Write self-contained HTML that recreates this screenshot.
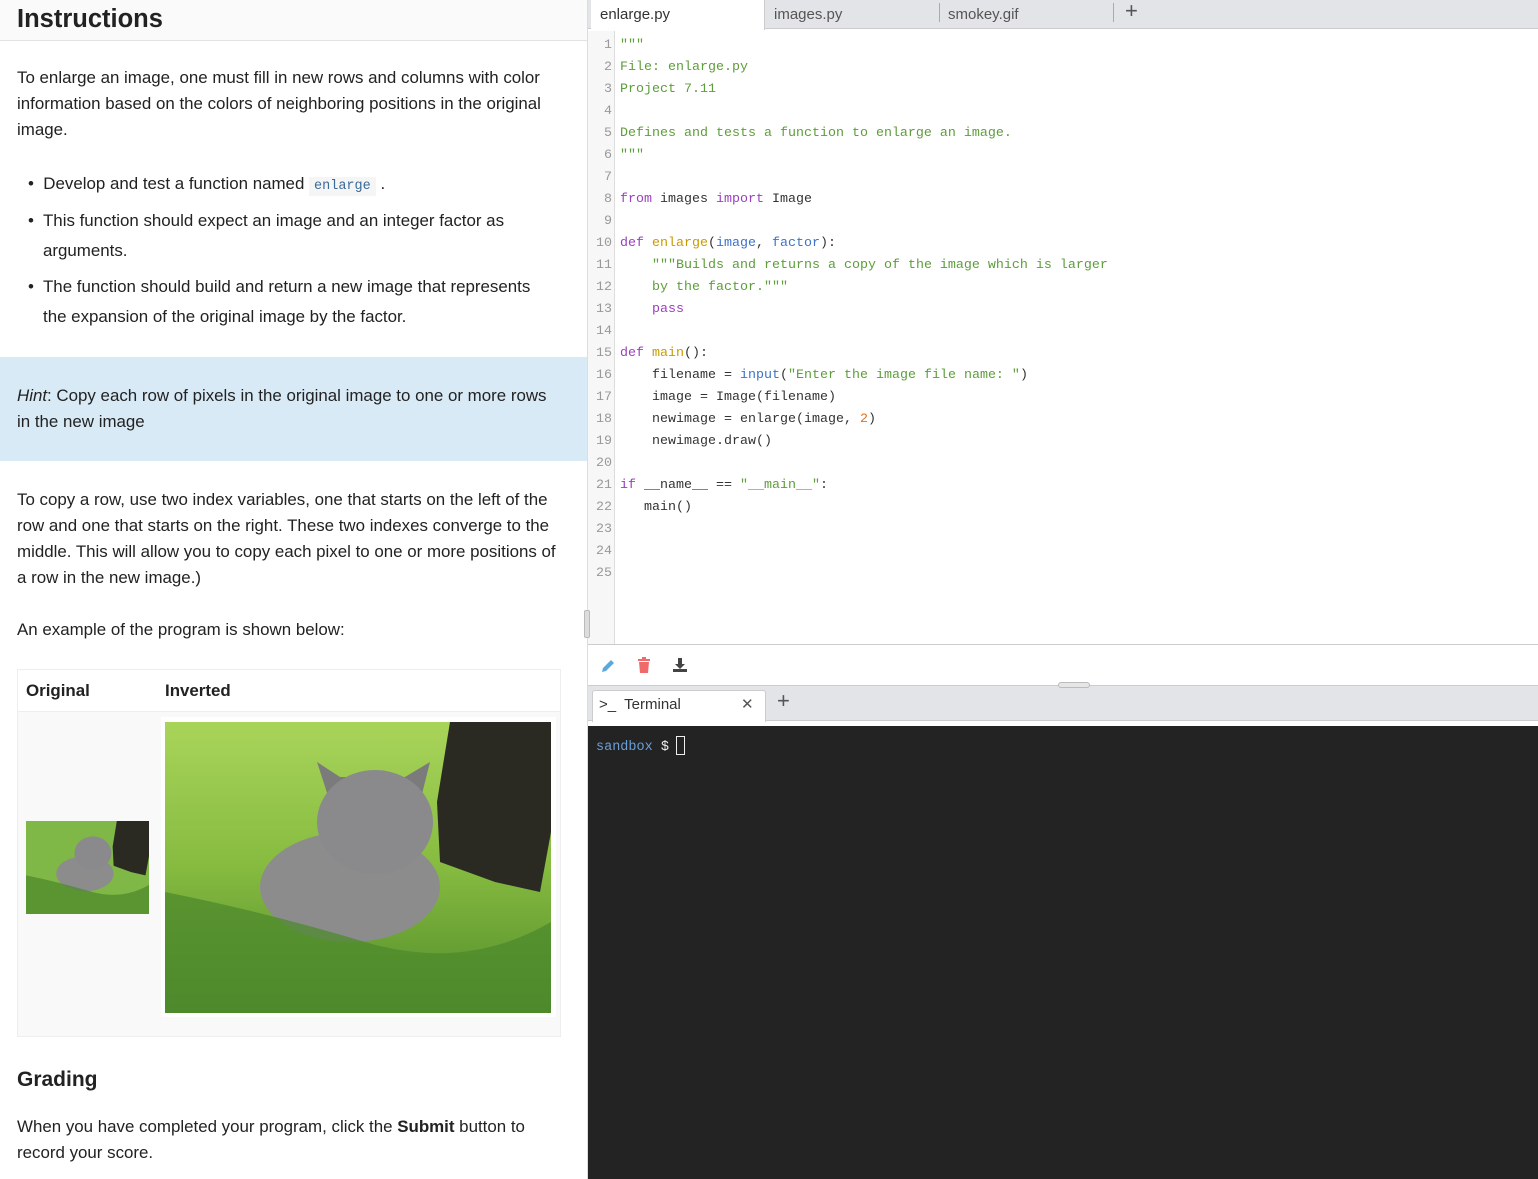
<!DOCTYPE html>
<html><head><meta charset="utf-8"><style>
*{margin:0;padding:0;box-sizing:border-box}
body{width:1538px;height:1179px;overflow:hidden;background:#fff;font-family:"Liberation Sans",sans-serif;color:#222;position:relative}
.l{position:absolute;white-space:nowrap;font-size:16.9px;line-height:26px}
.left{position:absolute;left:0;top:0;width:588px;height:1179px;background:#fff;border-right:1px solid #ddd}
code{font-family:"Liberation Mono",monospace;font-size:13.5px;background:#f5f5f5;color:#3a6a9a;padding:2px 5px}
.code{position:absolute;left:620px;top:35px;font-family:"Liberation Mono",monospace;font-size:13.33px;line-height:22px;color:#333;white-space:pre}
.gut{position:absolute;left:588px;top:35px;width:27px;height:609px;font-family:"Liberation Mono",monospace;font-size:13.33px;line-height:22px;color:#999;text-align:right;padding-right:3px;white-space:pre}
.s{color:#5c9e3a}.k{color:#9b3fc0}.f{color:#c99a00}.p{color:#3d73c8}.n{color:#e0701c}
</style></head><body>
<div class="left">
 <div style="position:absolute;left:0;top:0;width:587px;height:41px;background:#fafafa;border-bottom:1px solid #e2e2e2"></div>
 <div class="l" style="left:17px;top:4px;font-size:25.5px;font-weight:bold;line-height:30px;color:#222">Instructions</div>
 <div class="l" style="left:17px;top:65px">To enlarge an image, one must fill in new rows and columns with color</div>
 <div class="l" style="left:17px;top:91px">information based on the colors of neighboring positions in the original</div>
 <div class="l" style="left:17px;top:117px">image.</div>
 <div class="l" style="left:28px;top:171px">•&nbsp; Develop and test a function named <code>enlarge</code> .</div>
 <div class="l" style="left:28px;top:208px">•&nbsp; This function should expect an image and an integer factor as</div>
 <div class="l" style="left:43px;top:238px">arguments.</div>
 <div class="l" style="left:28px;top:274px">•&nbsp; The function should build and return a new image that represents</div>
 <div class="l" style="left:43px;top:304px">the expansion of the original image by the factor.</div>
 <div style="position:absolute;left:0;top:357px;width:587px;height:104px;background:#d9eaf7"></div>
 <div class="l" style="left:17px;top:383px"><i>Hint</i>: Copy each row of pixels in the original image to one or more rows</div>
 <div class="l" style="left:17px;top:409px">in the new image</div>
 <div class="l" style="left:17px;top:487px">To copy a row, use two index variables, one that starts on the left of the</div>
 <div class="l" style="left:17px;top:513px">row and one that starts on the right. These two indexes converge to the</div>
 <div class="l" style="left:17px;top:539px">middle. This will allow you to copy each pixel to one or more positions of</div>
 <div class="l" style="left:17px;top:565px">a row in the new image.)</div>
 <div class="l" style="left:17px;top:617px">An example of the program is shown below:</div>
 <div style="position:absolute;left:17px;top:669px;width:544px;height:368px;border:1px solid #eee;background:#f9f9f9"></div>
 <div style="position:absolute;left:18px;top:670px;width:542px;height:42px;background:#fff;border-bottom:1px solid #eee"></div>
 <div class="l" style="left:26px;top:678px;font-weight:bold">Original</div>
 <div class="l" style="left:165px;top:678px;font-weight:bold">Inverted</div>
 <div style="position:absolute;left:161px;top:717px;width:395px;height:300px;background:#fff"></div>
 <svg style="position:absolute;left:165px;top:722px" width="386" height="291" viewBox="0 0 386 291" preserveAspectRatio="none">
  <defs><linearGradient id="g" x1="0" y1="0" x2="0" y2="1"><stop offset="0" stop-color="#a9d45a"/><stop offset=".5" stop-color="#86bb40"/><stop offset="1" stop-color="#4f8a2a"/></linearGradient></defs>
  <rect width="386" height="291" fill="url(#g)"/>
  <path d="M285 0 H386 V110 L375 170 L330 160 L275 140 L272 80 Z" fill="#2a2a22"/>
  <ellipse cx="185" cy="165" rx="90" ry="55" fill="#8c8c8c"/>
  <path d="M152 40 L165 80 L255 80 L265 40 L240 55 L175 55 Z" fill="#7b7b7b"/>
  <ellipse cx="210" cy="100" rx="58" ry="52" fill="#8a8a8c"/>
  <path d="M0 170 Q100 190 200 220 T386 200 V291 H0Z" fill="#4d8a2c" opacity=".75"/>
 </svg>
 <svg style="position:absolute;left:26px;top:821px" width="123" height="93" viewBox="0 0 386 291" preserveAspectRatio="none">
  <rect width="386" height="291" fill="#7fb846"/>
  <path d="M285 0 H386 V110 L375 170 L330 160 L275 140 L272 80 Z" fill="#2a2a22"/>
  <ellipse cx="185" cy="165" rx="90" ry="55" fill="#8c8c8c"/>
  <ellipse cx="210" cy="100" rx="58" ry="52" fill="#8a8a8c"/>
  <path d="M0 170 Q100 190 200 220 T386 200 V291 H0Z" fill="#4d8a2c" opacity=".75"/>
 </svg>
 <div class="l" style="left:17px;top:1066px;font-size:21px;font-weight:bold;line-height:28px">Grading</div>
 <div class="l" style="left:17px;top:1114px">When you have completed your program, click the <b>Submit</b> button to</div>
 <div class="l" style="left:17px;top:1140px">record your score.</div>
</div>
<!-- tabs -->
<div style="position:absolute;left:588px;top:0;width:950px;height:29px;background:#e2e4e8;border-bottom:1px solid #ccc"></div>
<div style="position:absolute;left:591px;top:0;width:174px;height:30px;background:#fff;border-right:1px solid #ccc"></div>
<div class="l" style="left:600px;top:2px;font-size:15px;color:#333">enlarge.py</div>
<div class="l" style="left:774px;top:2px;font-size:15px;color:#555">images.py</div>
<div style="position:absolute;left:939px;top:3px;width:1px;height:19px;background:#aaa"></div>
<div class="l" style="left:948px;top:2px;font-size:15px;color:#555">smokey.gif</div>
<div style="position:absolute;left:1113px;top:3px;width:1px;height:19px;background:#aaa"></div>
<div class="l" style="left:1125px;top:-2px;font-size:22px;color:#555">+</div>
<div style="position:absolute;left:588px;top:31px;width:27px;height:613px;background:#f7f7f7;border-right:1px solid #ddd"></div>
<div class="gut">1
2
3
4
5
6
7
8
9
10
11
12
13
14
15
16
17
18
19
20
21
22
23
24
25</div>
<div class="code"><span class="s">"""
File: enlarge.py
Project 7.11

Defines and tests a function to enlarge an image.
"""</span>

<span class="k">from</span> images <span class="k">import</span> Image

<span class="k">def</span> <span class="f">enlarge</span>(<span class="p">image</span>, <span class="p">factor</span>):
    <span class="s">"""Builds and returns a copy of the image which is larger
    by the factor."""</span>
    <span class="k">pass</span>

<span class="k">def</span> <span class="f">main</span>():
    filename = <span class="p">input</span>(<span class="s">"Enter the image file name: "</span>)
    image = Image(filename)
    newimage = enlarge(image, <span class="n">2</span>)
    newimage.draw()

<span class="k">if</span> __name__ == <span class="s">"__main__"</span>:
   main()</div>
<div style="position:absolute;left:584px;top:610px;width:6px;height:28px;background:#ddd;border:1px solid #bbb;border-radius:2px"></div>
<div style="position:absolute;left:588px;top:644px;width:950px;height:1px;background:#ccc"></div>
<!-- toolbar icons -->
<svg style="position:absolute;left:600px;top:658px" width="16" height="16" viewBox="0 0 16 16"><path d="M2 14 L3 10 L11 2 L14 5 L6 13 Z" fill="#5aa8e0"/></svg>
<svg style="position:absolute;left:637px;top:657px" width="14" height="16" viewBox="0 0 14 16"><rect x="1" y="2" width="12" height="2" fill="#ef6b6b"/><rect x="5" y="0" width="4" height="2" fill="#ef6b6b"/><path d="M2 5 H12 L11 16 H3 Z" fill="#ef6b6b"/></svg>
<svg style="position:absolute;left:672px;top:657px" width="16" height="16" viewBox="0 0 16 16"><path d="M6 1 H10 V7 H13 L8 12 L3 7 H6 Z" fill="#444"/><rect x="1" y="12" width="14" height="3" fill="#444"/></svg>
<!-- terminal tabs -->
<div style="position:absolute;left:588px;top:685px;width:950px;height:36px;background:#e2e4e8;border-top:1px solid #ccc;border-bottom:1px solid #ccc"></div>
<div style="position:absolute;left:1058px;top:682px;width:32px;height:6px;background:#e6e6e6;border:1px solid #bbb;border-radius:3px"></div>
<div style="position:absolute;left:592px;top:690px;width:174px;height:32px;background:#fff;border:1px solid #ccc;border-bottom:none;border-radius:3px 3px 0 0"></div>
<div class="l" style="left:599px;top:692px;font-size:15px;color:#333">&gt;_&nbsp; Terminal</div>
<div class="l" style="left:741px;top:692px;font-size:15px;color:#555">✕</div>
<div class="l" style="left:777px;top:688px;font-size:22px;color:#555">+</div>
<div style="position:absolute;left:588px;top:726px;width:950px;height:453px;background:#232323"></div>
<div class="l" style="left:596px;top:735px;font-family:'Liberation Mono',monospace;font-size:13.5px;color:#6a9fd8">sandbox <span style="color:#eee">$</span></div>
<div style="position:absolute;left:676px;top:736px;width:9px;height:19px;border:1px solid #eee"></div>
</body></html>
